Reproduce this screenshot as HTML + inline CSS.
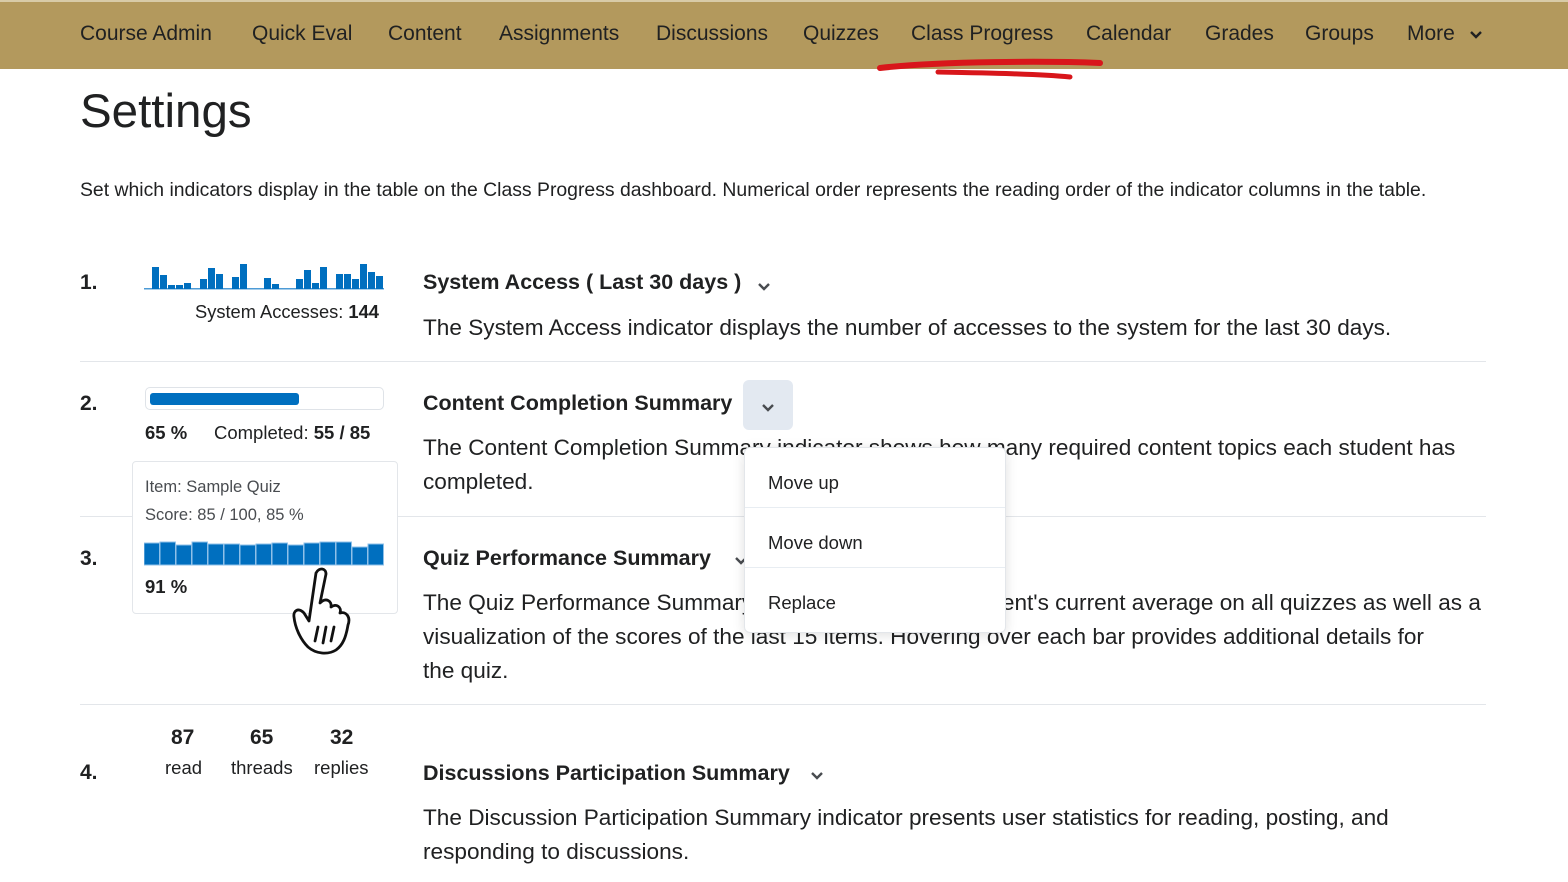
<!DOCTYPE html>
<html><head><meta charset="utf-8"><style>
*{margin:0;padding:0;box-sizing:border-box}
body{width:1568px;height:882px;overflow:hidden;background:#fff;font-family:"Liberation Sans",sans-serif;color:#202122;position:relative}
.a{position:absolute;white-space:nowrap}
.nav{position:absolute;left:0;top:0;width:1568px;height:69px;background:#b3995d;border-top:2px solid #d8cba8}
.nav span{position:absolute;top:20px;font-size:21px;color:#202122}
.hr{position:absolute;left:80px;width:1406px;height:1px;background:#e3e6ea}
.num{font-size:21px;font-weight:bold}
.h{font-size:21.5px;font-weight:bold}
.p{font-size:22.6px;line-height:34px}
.chev{position:absolute;width:14px;height:9px}
.menu{position:absolute;left:744px;top:447px;width:262px;height:186px;background:#fff;border:1px solid #e3e6ea;border-radius:6px;box-shadow:0 2px 12px rgba(0,0,0,.12)}
.menu div{height:60px;padding-left:23px;padding-top:5px;line-height:60px;font-size:18.5px;border-bottom:1px solid #e8edf2}
</style></head><body>
<div class="nav">
<span style="left:80px">Course Admin</span>
<span style="left:252px">Quick Eval</span>
<span style="left:388px">Content</span>
<span style="left:499px">Assignments</span>
<span style="left:656px">Discussions</span>
<span style="left:803px">Quizzes</span>
<span style="left:911px">Class Progress</span>
<span style="left:1086px">Calendar</span>
<span style="left:1205px">Grades</span>
<span style="left:1305px">Groups</span>
<span style="left:1407px">More</span>
<svg style="position:absolute;left:1469px;top:28px" width="14" height="9" viewBox="0 0 14 9"><path d="M2 2l5 5 5-5" stroke="#202122" stroke-width="2.4" fill="none"/></svg>
</div>
<svg class="a" style="left:870px;top:55px" width="240" height="30"><path d="M10 13 C70 6,180 6,230 8" stroke="#d8161b" stroke-width="6" stroke-linecap="round" fill="none"/><path d="M68 17 C120 18,170 19,200 22" stroke="#d8161b" stroke-width="5" stroke-linecap="round" fill="none"/></svg>

<div class="a" style="left:80px;top:84px;font-size:47.5px">Settings</div>
<div class="a" style="left:80px;top:179px;font-size:19.4px">Set which indicators display in the table on the Class Progress dashboard. Numerical order represents the reading order of the indicator columns in the table.</div>

<div class="a num" style="left:80px;top:271px">1.</div>
<svg class="a" style="left:144px;top:264px" width="240" height="26">
<g fill="#006fbf">
<rect x="0" y="24" width="240" height="1.5" fill="#4d9bd6"/>
<rect x="8" y="3" width="7" height="22"/><rect x="16" y="11" width="7" height="14"/><rect x="24" y="21" width="7" height="4"/><rect x="32" y="21" width="7" height="4"/><rect x="40" y="19" width="7" height="6"/>
<rect x="56" y="15" width="7" height="10"/><rect x="64" y="4" width="7" height="21"/><rect x="72" y="10" width="7" height="15"/>
<rect x="88" y="13" width="7" height="12"/><rect x="96" y="0" width="7" height="25"/>
<rect x="120" y="14" width="7" height="11"/><rect x="128" y="20" width="7" height="5"/>
<rect x="152" y="15" width="7" height="10"/><rect x="160" y="6" width="7" height="19"/><rect x="168" y="19" width="7" height="6"/><rect x="176" y="3" width="7" height="22"/>
<rect x="192" y="10" width="7" height="15"/><rect x="200" y="10" width="7" height="15"/><rect x="208" y="15" width="7" height="10"/><rect x="216" y="0" width="7" height="25"/><rect x="224" y="8" width="7" height="17"/><rect x="232" y="12" width="7" height="13"/>
</g></svg>
<div class="a" style="left:195px;top:301px;font-size:18.3px">System Accesses: <b>144</b></div>
<div class="a h" style="left:423px;top:270px">System Access ( Last 30 days )</div>
<svg class="chev" style="left:757px;top:282px" viewBox="0 0 14 9"><path d="M2 2l5 5 5-5" stroke="#494c50" stroke-width="2.4" fill="none"/></svg>
<div class="a p" style="left:423px;top:311px">The System Access indicator displays the number of accesses to the system for the last 30 days.</div>
<div class="hr" style="top:361px"></div>

<div class="a num" style="left:80px;top:392px">2.</div>
<div class="a" style="left:145px;top:387px;width:239px;height:23px;border:1.5px solid #dfe3e8;border-radius:5px"></div>
<div class="a" style="left:150px;top:393px;width:149px;height:12px;background:#006fbf;border-radius:3px"></div>
<div class="a" style="left:145px;top:422px;font-size:18.5px;font-weight:bold">65 %</div>
<div class="a" style="left:214px;top:422px;font-size:18.5px">Completed: <b>55 / 85</b></div>
<div class="a h" style="left:423px;top:391px">Content Completion Summary</div>
<div class="a" style="left:743px;top:380px;width:50px;height:50px;background:#e3e9f1;border-radius:6px"></div>
<svg class="chev" style="left:761px;top:403px" viewBox="0 0 14 9"><path d="M2 2l5 5 5-5" stroke="#494c50" stroke-width="2.4" fill="none"/></svg>
<div class="a p" style="left:423px;top:431px">The Content Completion Summary indicator shows how many required content topics each student has<br>completed.</div>
<div class="hr" style="top:516px"></div>

<div class="a num" style="left:80px;top:547px">3.</div>
<div class="a h" style="left:423px;top:546px">Quiz Performance Summary</div>
<svg class="chev" style="left:734px;top:556px" viewBox="0 0 14 9"><path d="M2 2l5 5 5-5" stroke="#494c50" stroke-width="2.4" fill="none"/></svg>
<div class="a p" style="left:423px;top:586px">The Quiz Performance Summary indicator shows the student's current average on all quizzes as well as a<br>visualization of the scores of the last 15 items. Hovering over each bar provides additional details for<br>the quiz.</div>
<div class="hr" style="top:704px"></div>

<div class="a" style="left:132px;top:461px;width:266px;height:153px;background:#fff;border:1px solid #e3e6ea;border-radius:4px"></div>
<div class="a" style="left:145px;top:478px;font-size:16.5px;color:#494c50">Item: Sample Quiz</div>
<div class="a" style="left:145px;top:506px;font-size:16.5px;color:#494c50">Score: 85 / 100, 85 %</div>
<svg class="a" style="left:144px;top:540px" width="240" height="26"><g fill="#006fbf" stroke="#8fc0e8" stroke-width="1">
<rect x="0" y="3" width="15.5" height="22"/><rect x="16" y="2" width="15.5" height="23"/><rect x="32" y="5" width="15.5" height="20"/><rect x="48" y="2" width="15.5" height="23"/><rect x="64" y="4" width="15.5" height="21"/><rect x="80" y="4" width="15.5" height="21"/><rect x="96" y="5" width="15.5" height="20"/><rect x="112" y="4" width="15.5" height="21"/><rect x="128" y="3" width="15.5" height="22"/><rect x="144" y="5" width="15.5" height="20"/><rect x="160" y="3" width="15.5" height="22"/><rect x="176" y="2" width="15.5" height="23"/><rect x="192" y="2" width="15.5" height="23"/><rect x="208" y="7" width="15.5" height="18"/><rect x="224" y="4" width="15.5" height="21"/></g></svg>
<div class="a" style="left:145px;top:576px;font-size:18.5px;font-weight:bold">91 %</div>
<svg class="a" style="left:288px;top:565px" width="70" height="92" viewBox="0 0 70 92"><path d="M28 8 C31 2,38 3,38 9 L32 38 C38 32,44 36,43 42 C48 38,54 42,52 48 C58 46,63 52,60 60 C58 72,55 80,48 85 C40 90,28 89,20 82 C12 74,7 62,6 52 C5 46,10 42,16 48 L21 56 Z" fill="#fff" stroke="#111" stroke-width="2.8" stroke-linejoin="round"/><path d="M30 62l-3 14M38 62l-3 16M46 62l-3 14" stroke="#111" stroke-width="2.8" stroke-linecap="round"/></svg>

<div class="menu"><div>Move up</div><div>Move down</div><div style="border:none">Replace</div></div>

<div class="a num" style="left:80px;top:761px">4.</div>
<div class="a" style="left:171px;top:726px;font-size:21px;font-weight:bold">87</div>
<div class="a" style="left:250px;top:726px;font-size:21px;font-weight:bold">65</div>
<div class="a" style="left:330px;top:726px;font-size:21px;font-weight:bold">32</div>
<div class="a" style="left:165px;top:757px;font-size:18.5px">read</div>
<div class="a" style="left:231px;top:757px;font-size:18.5px">threads</div>
<div class="a" style="left:314px;top:757px;font-size:18.5px">replies</div>
<div class="a h" style="left:423px;top:761px">Discussions Participation Summary</div>
<svg class="chev" style="left:810px;top:771px" viewBox="0 0 14 9"><path d="M2 2l5 5 5-5" stroke="#494c50" stroke-width="2.4" fill="none"/></svg>
<div class="a p" style="left:423px;top:801px">The Discussion Participation Summary indicator presents user statistics for reading, posting, and<br>responding to discussions.</div>
</body></html>
